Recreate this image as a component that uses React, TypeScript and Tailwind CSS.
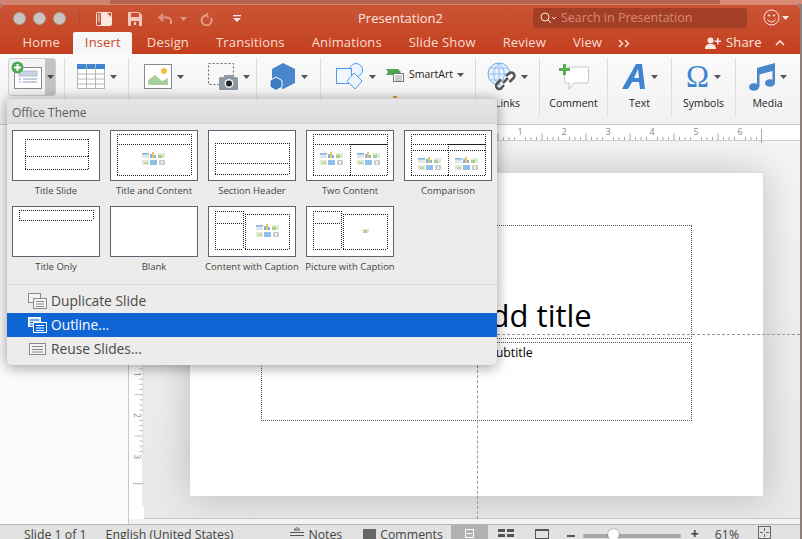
import type { ReactNode } from "react";

const font = "font-['Open_Sans','Noto_Sans',sans-serif]";

function Caret({ className = "fill-[#555]" }: { className?: string }) {
    return (
        <svg width="7" height="4" viewBox="0 0 7 4" className={className}>
            <path d="M0 0h7L3.5 4z" />
        </svg>
    );
}

function Sep() {
    return <div className="w-px self-stretch mt-[4px] mb-[7px] bg-[#dcdcdc]" />;
}

function DotBox({ x, y, w, h, noLeft }: { x: number; y: number; w: number; h: number; noLeft?: boolean }) {
    const lines = [
        `M${x} ${y + 0.5}h${w}`,
        `M${x} ${y + h + 0.5}h${w}`,
        `M${x + w + 0.5} ${y}v${h}`,
    ];
    if (!noLeft) lines.push(`M${x + 0.5} ${y}v${h}`);
    return (
        <>
            {lines.map((d) => (
                <path key={d} d={d} fill="none" stroke="#222" strokeDasharray="1 1" />
            ))}
        </>
    );
}

function MiniIcons({ cx, cy, only }: { cx: number; cy: number; only?: boolean }) {
    if (only) {
        return (
            <g>
                <rect x={cx - 3} y={cy - 2} width="7" height="4" fill="#dfe9d4" />
                <rect x={cx - 1} y={cy - 1} width="3" height="3" fill="#a9cf8f" />
            </g>
        );
    }
    return (
        <g>
            <rect x={cx - 11} y={cy - 5} width="7" height="5" fill="#e3e6ea" />
            <rect x={cx - 11} y={cy - 5} width="7" height="1.5" fill="#7fb0e6" />
            <rect x={cx - 3} y={cy - 4} width="2" height="4" fill="#7fb0e6" />
            <rect x={cx - 1} y={cy - 6} width="2" height="6" fill="#f2c14e" />
            <rect x={cx + 1} y={cy - 3} width="2" height="3" fill="#7fb0e6" />
            <rect x={cx + 5} y={cy - 5} width="7" height="5" fill="#dfe9d4" />
            <rect x={cx + 5} y={cy - 3} width="4" height="3" fill="#a9cf8f" />
            <rect x={cx - 11} y={cy + 2} width="7" height="5" fill="#dfe9d4" />
            <rect x={cx - 9} y={cy + 4} width="4" height="2" fill="#b9d79e" />
            <rect x={cx - 3} y={cy + 2} width="7" height="5" fill="#8dc0ee" />
            <rect x={cx + 6} y={cy + 2} width="6" height="5" rx="1" fill="#c9c9c9" />
            <rect x={cx + 8} y={cy + 3} width="2" height="3" fill="#efefef" />
        </g>
    );
}

const layouts: { name: string; draw: ReactNode }[] = [
    { name: "Title Slide", draw: <><DotBox x={13} y={9} w={63} h={17} /><DotBox x={13} y={26} w={63} h={13} /></> },
    { name: "Title and Content", draw: <><DotBox x={7} y={4} w={74} h={10} /><DotBox x={7} y={14} w={74} h={31} /><MiniIcons cx={43} cy={28} /></> },
    { name: "Section Header", draw: <><DotBox x={7} y={13} w={74} h={20} /><DotBox x={7} y={33} w={74} h={11} /></> },
    { name: "Two Content", draw: <><DotBox x={7} y={4} w={74} h={10} /><DotBox x={7} y={14} w={37} h={31} /><DotBox x={44} y={14} w={37} h={31} noLeft /><MiniIcons cx={25} cy={28} /><MiniIcons cx={62} cy={28} /></> },
    { name: "Comparison", draw: <><DotBox x={7} y={4} w={74} h={10} /><DotBox x={7} y={14} w={37} h={6} /><DotBox x={44} y={14} w={37} h={6} noLeft /><DotBox x={7} y={20} w={37} h={25} /><DotBox x={44} y={20} w={37} h={25} noLeft /><MiniIcons cx={25} cy={33} /><MiniIcons cx={62} cy={33} /></> },
    { name: "Title Only", draw: <DotBox x={7} y={4} w={74} h={10} /> },
    { name: "Blank", draw: null },
    { name: "Content with Caption", draw: <><DotBox x={7} y={5} w={28} h={12} /><DotBox x={7} y={17} w={28} h={26} /><DotBox x={37} y={8} w={44} h={35} /><MiniIcons cx={59} cy={24} /></> },
    { name: "Picture with Caption", draw: <><DotBox x={7} y={5} w={28} h={12} /><DotBox x={7} y={17} w={28} h={26} /><DotBox x={37} y={8} w={44} h={35} /><MiniIcons cx={59} cy={25} only /></> },
];

function LayoutThumb({ name, draw }: { name: string; draw: ReactNode }) {
    return (
        <div className="w-[88px] flex flex-col items-center">
            <svg width="88" height="51" viewBox="0 0 88 51" className="block">
                <rect x="0.5" y="0.5" width="87" height="50" fill="#fff" stroke="#5b6672" />
                {draw}
            </svg>
            <span className="mt-[4px] text-[9.5px] leading-[12px] whitespace-nowrap text-[#444]">{name}</span>
        </div>
    );
}

function SlideGlyph({ kind, color, bg }: { kind: "dup" | "outline" | "reuse"; color: string; bg: string }) {
    return (
        <svg width="19" height="17" viewBox="0 0 19 17" fill="none" stroke={color}>
            {kind === "reuse" ? (
                <>
                    <rect x="1.5" y="2.5" width="16" height="11" fill={bg} />
                    <path d="M4 5.5h11M4 8.5h11M4 11h11" />
                </>
            ) : (
                <>
                    <rect x="0.5" y="0.5" width="12" height="9" fill={kind === "outline" ? "#dbe8fa" : bg} />
                    {kind === "outline" && <path d="M2 3h9M2 5.5h9M2 8h9" stroke="#1065d4" />}
                    <rect x="5.5" y="5.5" width="13" height="10" fill={kind === "outline" ? "#1065d4" : bg} />
                    <path d="M8 8.5h8M8 11h8M8 13.5h8" />
                </>
            )}
        </svg>
    );
}

function SlideMenu() {
    return (
        <div className="absolute left-[7px] top-[98px] w-[490px] h-[267px] rounded-b-[5px] bg-[#ececec] border-t border-[#cfcfcf] shadow-[0_2px_14px_rgba(0,0,0,0.4)] flex flex-col">
            <div className="h-[25px] shrink-0 flex items-center pl-[5px] pt-[3px] text-[12px] text-[#5e5e5e] bg-gradient-to-b from-[#e6e6e6] to-[#dcdcdc] border-b border-[#d4d4d4]">
                Office Theme
            </div>
            <div className="grid grid-cols-[88px_88px_88px_88px_88px] gap-x-[10px] gap-y-[9px] pl-[5px] pt-[6px]">
                {layouts.map((l) => (
                    <LayoutThumb key={l.name} name={l.name} draw={l.draw} />
                ))}
            </div>
            <div className="mt-[11px] h-px bg-[#d8d8d8]" />
            <div className="mt-[4px] flex flex-col text-[13.8px] text-[#4a4a4a]">
                <div className="h-[24px] flex items-center gap-[4px] pl-[21px]">
                    <SlideGlyph kind="dup" color="#8a8a8a" bg="#f4f4f4" />
                    <span className="pt-[1px]">Duplicate Slide</span>
                </div>
                <div className="h-[24px] flex items-center gap-[4px] pl-[21px] bg-[#1065d4] text-white">
                    <SlideGlyph kind="outline" color="#fff" bg="#1065d4" />
                    <span className="pt-[1px]">Outline...</span>
                </div>
                <div className="h-[24px] flex items-center gap-[4px] pl-[21px]">
                    <SlideGlyph kind="reuse" color="#8a8a8a" bg="#f4f4f4" />
                    <span className="pt-[1px]">Reuse Slides...</span>
                </div>
            </div>
        </div>
    );
}

function TitleBar() {
    return (
        <div className="h-[27px] flex items-center pl-[13px] relative text-[#fbe7e0]">
            <div className="flex gap-[7px]">
                <div className="w-[13px] h-[13px] rounded-full bg-[#c9c4c2] border border-[#a8a09d]" />
                <div className="w-[13px] h-[13px] rounded-full bg-[#c9c4c2] border border-[#a8a09d]" />
                <div className="w-[13px] h-[13px] rounded-full bg-[#c9c4c2] border border-[#a8a09d]" />
            </div>
            <div className="w-px h-[16px] bg-[#b8492e] ml-[13px]" />
            <svg width="16" height="14" viewBox="0 0 16 14" className="ml-[16px]">
                <rect x="0.5" y="0.5" width="15" height="13" rx="1" fill="none" stroke="#fbe7e0" />
                <rect x="5" y="1" width="10" height="12" fill="#fbe7e0" />
                <path d="M11 1h4v4z" fill="#c94f30" />
                <path d="M2 3h2M2 5h2M2 7h2M2 9h2" stroke="#fbe7e0" />
            </svg>
            <svg width="14" height="14" viewBox="0 0 14 14" className="ml-[16px]">
                <path d="M1 0h10l3 3v10a1 1 0 0 1-1 1H1a1 1 0 0 1-1-1V1a1 1 0 0 1 1-1z" fill="#f3c9bc" />
                <rect x="3" y="1" width="8" height="4" fill="#c94f30" />
                <rect x="3" y="9" width="8" height="5" fill="#c94f30" />
                <rect x="6" y="10" width="2" height="3" fill="#f3c9bc" />
            </svg>
            <svg width="16" height="12" viewBox="0 0 16 12" fill="none" stroke="#e09a84" strokeWidth="2" className="ml-[16px]">
                <path d="M5 1L1.5 4.5 5 8M2 4.5h7a4 4 0 0 1 4 4V11" />
            </svg>
            <Caret className="fill-[#e09a84] ml-[6px]" />
            <svg width="13" height="14" viewBox="0 0 13 14" fill="none" stroke="#e09a84" strokeWidth="2" className="ml-[13px]">
                <path d="M8 1l-2 2.5L8.5 5M5.5 3.5A5 5 0 1 0 11 6" />
            </svg>
            <svg width="8" height="7" viewBox="0 0 8 7" className="ml-[20px] fill-[#fbe7e0]">
                <path d="M0 0h8v1.2H0zM0 3h8L4 7z" />
            </svg>
            <span className="absolute left-[358px] text-[13px] leading-none">Presentation2</span>
            <div className="absolute left-[533px] top-[3px] w-[214px] h-[20px] rounded-[3px] bg-[#a33f26] flex items-center pl-[7px]">
                <svg width="17" height="12" viewBox="0 0 17 12" fill="none" stroke="#fbe7e0">
                    <circle cx="5" cy="5" r="4" />
                    <path d="M8 8l3 3M12 5l2 2 2-2" />
                </svg>
                <span className="ml-[4px] text-[12.5px] text-[#d58a75]">Search in Presentation</span>
            </div>
            <svg width="17" height="17" viewBox="0 0 17 17" fill="none" stroke="#fbe7e0" className="absolute left-[763px] top-[4px]">
                <circle cx="8.5" cy="8.5" r="7.5" />
                <circle cx="6" cy="6.5" r="0.7" fill="#fbe7e0" />
                <circle cx="11" cy="6.5" r="0.7" fill="#fbe7e0" />
                <path d="M4.5 10.5a4.5 4.5 0 0 0 8 0" />
            </svg>
            <Caret className="fill-[#fbe7e0] absolute left-[782px] top-[11px]" />
        </div>
    );
}

function TabRow() {
    const tabs = ["Home", "Insert", "Design", "Transitions", "Animations", "Slide Show", "Review", "View"];
    return (
        <div className="h-[22px] flex items-stretch pl-[9px] relative text-[13px] tracking-[0.15px] font-medium text-[#fbdcd3]">
            {tabs.map((t) =>
                t === "Insert" ? (
                    <div key={t} className="w-[59px] mr-[1px] flex items-center justify-center rounded-t-[2px] bg-[#f7f7f7] text-[#c9431f]">
                        {t}
                    </div>
                ) : (
                    <div key={t} className="px-[13.5px] flex items-center">
                        {t}
                    </div>
                )
            )}
            <div className="flex items-center ml-[2px]">
                <svg width="12" height="9" viewBox="0 0 12 9" fill="none" stroke="#fbdcd3" strokeWidth="1.5">
                    <path d="M1 1l3.5 3.5L1 8M7 1l3.5 3.5L7 8" />
                </svg>
            </div>
            <div className="absolute left-[705px] top-0 h-full flex items-center text-[#fbe7e0]">
                <svg width="16" height="12" viewBox="0 0 16 12" className="fill-[#fbe7e0]">
                    <circle cx="5.5" cy="3.5" r="3" />
                    <path d="M0 12c0-4 2-5 5.5-5s5.5 1 5.5 5zM12 1h1.5v2.5H16V5h-2.5v2.5H12V5H9.5V3.5H12z" />
                </svg>
                <span className="ml-[5px]">Share</span>
                <svg width="10" height="6" viewBox="0 0 10 6" fill="none" stroke="#fbe7e0" strokeWidth="1.6" className="ml-[13px]">
                    <path d="M1 5l4-4 4 4" />
                </svg>
            </div>
        </div>
    );
}

function NewSlideButton() {
    return (
        <div className="w-[64px] pl-[8px] pt-[4px]">
            <div className="w-[48px] h-[38px] rounded-[3px] border border-[#cfcfcf] flex relative bg-[#f4f4f4]">
                <div className="flex-1 flex items-center justify-center pl-[1px] pt-[3px]">
                    <svg width="28" height="23" viewBox="0 0 28 23" fill="#fff" stroke="#8b8b8b">
                        <rect x="0.5" y="0.5" width="27" height="21" />
                        <rect x="5" y="4" width="18" height="5" fill="#c9d3e6" stroke="#b4bccb" />
                        <path d="M5 12h2M9 12h14M5 15h2M9 15h14" stroke="#8c9ab8" />
                    </svg>
                </div>
                <div className="w-[10px] rounded-r-[2px] bg-[#c3c3c3] flex items-center justify-center">
                    <Caret className="fill-[#444]" />
                </div>
                <svg width="13" height="13" viewBox="0 0 13 13" className="absolute left-[2px] top-[2px]">
                    <circle cx="6.5" cy="6.5" r="6" fill="#4aa851" />
                    <path d="M5.5 3h2v2.500H10v2H7.500V10h-2V7.500H3v-2h2.500z" fill="#fff" />
                </svg>
            </div>
        </div>
    );
}

function IconGroup({ width, label, caret, children }: { width: number; label?: string; caret?: boolean; children: ReactNode }) {
    return (
        <div style={{ width }} className="shrink-0 flex flex-col items-center pt-[7px]">
            <div className="h-[31px] flex items-center gap-[5px]">
                {children}
                {caret && <Caret />}
            </div>
            {label && <span className="mt-[4px] text-[10.5px] leading-[14px] text-[#222]">{label}</span>}
        </div>
    );
}

function Ribbon() {
    return (
        <div className="h-[71px] shrink-0 flex bg-gradient-to-b from-[#fafafa] to-[#f1f1f1] border-b border-[#c8c8c8]">
            <NewSlideButton />
            <Sep />
            <IconGroup width={63} caret>
                <svg width="28" height="25" viewBox="0 0 28 25" fill="#fff" stroke="#b5b5b5">
                    <rect x="0.5" y="0.5" width="27" height="24" />
                    <rect x="0" y="0" width="28" height="5" fill="#3f84d1" stroke="none" />
                    <path d="M0 10h28M0 15h28M0 20h28M9.500 0v25M18.500 0v25" />
                </svg>
            </IconGroup>
            <Sep />
            <div className="w-[127px] shrink-0 flex pl-[13px] gap-[21px]">
                <IconGroup width={44} caret>
                    <svg width="28" height="25" viewBox="0 0 28 25">
                        <rect x="0.5" y="0.5" width="27" height="24" fill="#fff" stroke="#8a8a8a" />
                        <circle cx="20" cy="7" r="3" fill="#f0c040" />
                        <path d="M4 21v-5l7-5 7 6 6-3v7z" fill="#a9cf9c" />
                    </svg>
                </IconGroup>
                <IconGroup width={44} caret>
                    <svg width="30" height="28" viewBox="0 0 30 28">
                        <rect x="0.5" y="0.5" width="25" height="21" fill="none" stroke="#666" strokeDasharray="2 2" />
                        <rect x="11" y="14" width="19" height="13" rx="1.5" fill="#8e97a6" />
                        <rect x="16" y="12" width="9" height="3" fill="#8e97a6" />
                        <circle cx="21" cy="20.5" r="4.5" fill="#eee" />
                        <circle cx="21" cy="20.5" r="3" fill="#222" />
                    </svg>
                </IconGroup>
            </div>
            <Sep />
            <IconGroup width={63} caret>
                <svg width="27" height="28" viewBox="0 0 27 28">
                    <path d="M14 0l12 6v14l-12 6-11-6V6z" fill="#4a86cc" />
                    <path d="M7 14l6 3.500v6.500l-6 3.500-6-3.500v-6.500z" fill="#3f7cc4" stroke="#fff" />
                </svg>
            </IconGroup>
            <Sep />
            <div className="w-[154px] shrink-0 flex pl-[15px]">
                <div className="flex items-start pt-[7px] gap-[5px]">
                    <div className="h-[31px] flex items-center gap-[5px]">
                        <svg width="28" height="29" viewBox="0 0 28 29" fill="#f0f6fd" stroke="#4f9ae8">
                            <circle cx="20" cy="8" r="6.5" />
                            <rect x="0.5" y="6.5" width="15" height="15" />
                            <path d="M18 11l8 8-7 8-8-8z" />
                        </svg>
                        <Caret />
                    </div>
                </div>
                <div className="ml-[10px] pt-[13px] flex flex-col">
                    <div className="flex items-center h-[15px]">
                        <svg width="18" height="14" viewBox="0 0 18 14">
                            <path d="M0 1h12l3 3-3 3H0l2-3z" fill="#4aa851" />
                            <rect x="7.500" y="5.500" width="10" height="8" fill="#fff" stroke="#777" />
                            <path d="M9 8h7M9 10h7M9 12h7" stroke="#999" />
                        </svg>
                        <span className="ml-[5px] text-[10.5px] text-[#222]">SmartArt</span>
                        <Caret className="fill-[#555] ml-[4px]" />
                    </div>
                    <div className="ml-[7px] mt-[14px] w-[4px] h-[2px] bg-[#d8a030]" />
                </div>
            </div>
            <Sep />
            <IconGroup width={63} label="Links" caret>
                <svg width="29" height="29" viewBox="0 0 29 29" fill="none">
                    <circle cx="12" cy="12" r="11" fill="#e8f2fc" stroke="#6aa8e8" />
                    <path d="M1 12h22M12 1v22M3 6h18M3 18h18M12 1c-7 6-7 16 0 22M12 1c7 6 7 16 0 22" stroke="#8dbcee" />
                    <path d="M22 12l5 5-9 10-5-5z" fill="#fff" />
                    <path d="M19 14l3-2.500a3 3 0 0 1 4.500 4.500l-4 4M17 23l-2.500 3a3 3 0 0 1-4.500-4.500l4-4" stroke="#555" strokeWidth="2.500" />
                    <path d="M16 21l5-5" stroke="#555" strokeWidth="2.500" />
                </svg>
            </IconGroup>
            <Sep />
            <IconGroup width={67} label="Comment">
                <svg width="30" height="26" viewBox="0 0 30 26" fill="none">
                    <path d="M8 3h20a1.500 1.500 0 0 1 1.500 1.500v13A1.500 1.500 0 0 1 28 19H15l-5 6v-6H7a1.500 1.500 0 0 1-1.500-1.500V9" fill="#fff" stroke="#c4c4c4" />
                    <path d="M4 0h3v4h4v3H7v4H4V7H0V4h4z" fill="#59ac50" />
                </svg>
            </IconGroup>
            <Sep />
            <IconGroup width={63} label="Text" caret>
                <svg width="24" height="27" viewBox="0 0 24 27">
                    <path d="M14 1h6l3 25h-5l-1-7H10l-4 7H0zM16 6l-4 9h5z" fill="#3f84d1" fillRule="evenodd" />
                </svg>
            </IconGroup>
            <Sep />
            <IconGroup width={63} label="Symbols" caret>
                <span className="text-[31px] leading-none font-['Liberation_Serif',serif] text-[#3f84d1]">Ω</span>
            </IconGroup>
            <Sep />
            <IconGroup width={63} label="Media" caret>
                <svg width="26" height="28" viewBox="0 0 26 28" fill="#4a86cc">
                    <ellipse cx="5" cy="24" rx="5" ry="3.800" />
                    <ellipse cx="21" cy="20" rx="5" ry="3.800" />
                    <path d="M8 24V5L26 0v20h-2.500V8L10.500 11.500V24z" />
                </svg>
            </IconGroup>
        </div>
    );
}

function TopRuler() {
    const ticks = Array.from({ length: 52 }, (_, i) => i);
    return (
        <svg width="656" height="19" viewBox="0 0 656 19" className="block shrink-0">
            <rect x="0" y="0" width="656" height="15" fill="#fff" />
            <path d="M0 15.500h656" stroke="#d0d0d0" />
            {ticks.map((i) => {
                const x = 332 + i * 5.5;
                if (i % 8 === 0) return null;
                return <path key={i} d={`M${x} ${i % 8 === 4 ? 8 : 12}V15`} stroke="#aaa" />;
            })}
            {[1, 2, 3, 4, 5, 6].map((n) => (
                <text key={n} x={332 + n * 44} y="10" textAnchor="middle" fontSize="9" fill="#888">
                    {n}
                </text>
            ))}
            <path d="M617.500 4V18" stroke="#aaa" />
        </svg>
    );
}

function LeftRuler() {
    const ticks = Array.from({ length: 30 }, (_, i) => i - 29);
    return (
        <svg width="16" height="394" viewBox="0 0 16 394" className="block shrink-0 border-l border-[#c8c8c8] bg-white">
            {ticks.map((i) => {
                const y = 340.5 + i * 5.5;
                if ((i + 32) % 8 === 0) return null;
                return <path key={i} d={`M${(i + 32) % 8 === 4 ? 6 : 11} ${y}H15`} stroke="#bbb" />;
            })}
            {[1, 2, 3].map((n) => (
                <text key={n} x="0" y="0" transform={`translate(5 ${208.5 + n * 44}) rotate(90)`} textAnchor="middle" fontSize="9" fill="#888">
                    {n}
                </text>
            ))}
            <path d="M4 369.500H15" stroke="#aaa" />
            <path d="M15 0V394" stroke="#d0d0d0" />
        </svg>
    );
}

function Slide() {
    return (
        <div className="w-[574px] h-[324px] ml-[46px] mt-[28px] shrink-0 bg-white border-t border-r border-[#dcdcdc] shadow-[0_0_34px_rgba(0,0,0,0.2)] pt-[52px] pl-[71px] text-black font-['Open_Sans',sans-serif]">
            <div className="w-[431px] h-[114px] border border-dotted border-[#555] flex items-end justify-center">
                <span className="text-[31px] leading-[40px] pb-[3px]">Click to add title</span>
            </div>
            <div className="w-[431px] h-[79px] mt-[3px] border border-dotted border-[#555] flex justify-center">
                <span className="text-[12.3px] leading-[16px] pt-[2px]">Click to add subtitle</span>
            </div>
        </div>
    );
}

function StatusBar() {
    return (
        <div className="h-[15px] shrink-0 flex bg-[#e2e2e2] border-t border-[#b5b5b5] text-[12.3px] leading-[20px] text-[#444] relative overflow-hidden">
            <span className="ml-[24px]">Slide 1 of 1</span>
            <span className="ml-[19px]">English (United States)</span>
            <svg width="14" height="10" viewBox="0 0 14 10" fill="none" stroke="#555" className="ml-[57px] mt-[2px]">
                <path d="M4 3l3-2.500L10 3zM0 5.500h14M0 8.500h14" />
            </svg>
            <span className="ml-[4px]">Notes</span>
            <div className="ml-[21px] mt-[4px] w-[13px] h-[13px] bg-[#666]" />
            <span className="ml-[4px]">Comments</span>
            <div className="ml-[8px] w-[37px] bg-[#b1b1b1] flex justify-center pt-[4px]">
                <div className="w-[9px] h-[9px] border border-white flex items-center justify-center">
                    <div className="w-[5px] h-[1px] bg-white" />
                </div>
            </div>
            <div className="ml-[10px] pt-[4px] grid grid-cols-2 gap-x-[2px] gap-y-[2px] h-fit">
                <div className="w-[7px] h-[3px] bg-[#555]" />
                <div className="w-[7px] h-[3px] bg-[#555]" />
                <div className="w-[7px] h-[3px] bg-[#555]" />
                <div className="w-[7px] h-[3px] bg-[#555]" />
            </div>
            <div className="ml-[21px] mt-[4px] w-[14px] h-[10px] border border-[#555] border-t-2" />
            <div className="ml-[18px] mt-[10px] w-[8px] h-[2px] bg-[#555]" />
            <div className="ml-[8px] mt-[9px] w-[98px] h-[4px] rounded-full bg-[#a8a8a8] relative">
                <div className="absolute left-[25px] -top-[5px] w-[11px] h-[11px] rounded-full bg-white shadow-[0_0_2px_rgba(0,0,0,0.5)]" />
            </div>
            <span className="ml-[10px] text-[14px] leading-[18px] font-bold">+</span>
            <span className="ml-[16px]">61%</span>
            <svg width="13" height="13" viewBox="0 0 13 13" fill="none" stroke="#666" className="ml-[19px] mt-[1px]">
                <rect x="0.5" y="0.5" width="12" height="12" />
                <path d="M6.500 2v3M6.500 8v3M2 6.500h3M8 6.500h3" />
            </svg>
        </div>
    );
}

export default function App() {
    return (
        <div className={`relative w-[802px] h-[539px] overflow-hidden bg-[#8d7f7b] ${font}`}>
            <div className="h-[4px] flex bg-[#c9806c]">
                <div className="w-[110px] bg-[#cf8570]" />
                <div className="w-[610px] bg-[#b5634f]" />
                <div className="flex-1 bg-[#d98a75]" />
            </div>
            <div className="w-[800px] h-[535px] rounded-t-[5px] overflow-hidden flex flex-col bg-[#f2f2f2]">
                <div className="shrink-0 bg-gradient-to-b from-[#ca5536] to-[#c33f1d] border-t border-[#d9836c]">
                    <TitleBar />
                    <TabRow />
                </div>
                <Ribbon />
                <div className="flex-1 flex min-h-0">
                    <div className="w-[128px] shrink-0 bg-[#fbfbfb]" />
                    <LeftRuler />
                    <div className="flex-1 flex flex-col overflow-hidden bg-gradient-to-b from-[#f4f4f4] to-[#e8e8e8] border-b border-[#c8c8c8]">
                        <TopRuler />
                        <Slide />
                    </div>
                </div>
                <div className="h-[5px] shrink-0 flex bg-[#f2f2f2]">
                    <div className="w-[129px] bg-[#fbfbfb] border-r border-[#c8c8c8]" />
                </div>
                <StatusBar />
            </div>
            {/* guides sit over the slide */}
            <div className="absolute left-[477px] top-[340px] h-[179px] border-l border-dashed border-[#999]" />
            <div className="absolute left-[497px] top-[334px] w-[303px] border-t border-dashed border-[#999]" />
            <SlideMenu />
        </div>
    );
}
